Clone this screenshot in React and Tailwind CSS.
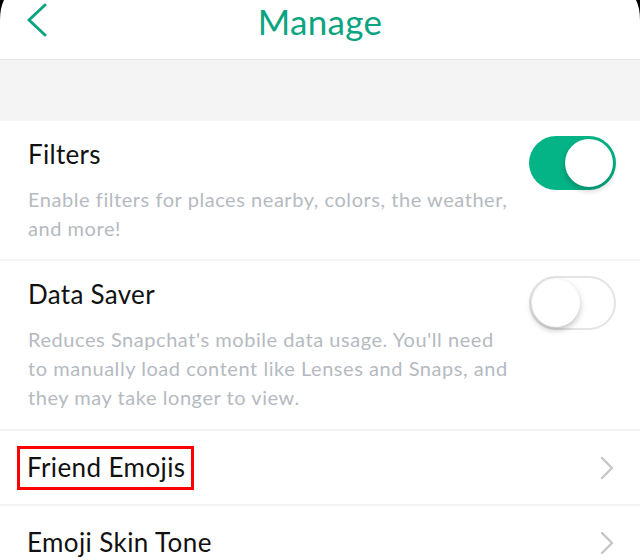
// App.jsx
const GREEN = '#0aa480';

const BackIcon = () => (
  <svg width="22" height="34" viewBox="0 0 22 34" fill="none">
    <polyline points="19,2 3,17 19,32" stroke={GREEN} strokeWidth="3" strokeLinecap="round" strokeLinejoin="round" />
  </svg>
);

const ChevronRight = () => (
  <svg width="14" height="22" viewBox="0 0 14 22" fill="none">
    <polyline points="2,1 12,11 2,21" stroke="#c6c6c6" strokeWidth="2.4" strokeLinecap="round" strokeLinejoin="round" />
  </svg>
);

const Toggle = ({ on }) => (
  <div
    className={`relative shrink-0 w-[87px] h-[54px] rounded-full mt-[15px] ${
      on ? 'bg-[#04b487]' : 'bg-white border-2 border-[#e4e4e4]'
    }`}
  >
    <div
      className={`absolute top-1/2 -translate-y-1/2 w-[48px] h-[48px] rounded-full bg-white shadow-[0_3px_6px_rgba(0,0,0,0.25)] ${
        on ? 'right-[3px]' : 'left-[1px]'
      }`}
    />
  </div>
);

const ToggleSection = ({ title, lines, on, height }) => (
  <div className={`flex justify-between pl-[28px] pr-[24px] bg-white ${height}`}>
    <div className="flex flex-col">
      <div className="text-[26px] leading-[32px] tracking-[0.3px] text-[#111] mt-[17px]">{title}</div>
      <div className="text-[20px] leading-[29px] tracking-[0.55px] text-[#b5bac1] mt-[15px]">
        {lines.map((l, i) => (
          <div key={i}>{l}</div>
        ))}
      </div>
    </div>
    <Toggle on={on} />
  </div>
);

const LinkRow = ({ label, boxed }) => (
  <div className="flex items-center justify-between h-[73px] pl-[17px] pr-[26px] bg-white">
    <div
      className={`h-[44px] flex items-center pl-[7px] pr-[6px] border-[3px] text-[26px] tracking-[0.4px] text-[#111] ${
        boxed ? 'border-[#ff0000]' : 'border-transparent'
      }`}
    >
      {label}
    </div>
    <ChevronRight />
  </div>
);

export default function App() {
  return (
    <div className="relative w-[640px] h-[560px] overflow-hidden bg-white font-['Lato','Noto_Sans',sans-serif]">
      <svg className="absolute left-0 top-0" width="6" height="22" viewBox="0 0 6 22">
        <path d="M0 0 L4 0 Q0 8 0 20 Z" fill="#000" />
      </svg>
      <svg className="absolute right-0 top-0" width="6" height="22" viewBox="0 0 6 22">
        <path d="M6 0 L2 0 Q6 8 6 20 Z" fill="#000" />
      </svg>

      <header className="grid grid-cols-[1fr_auto_1fr] items-center h-[60px] border-b border-[#e6e6e6]">
        <div className="pl-[26px] flex items-center -mt-[20px]">
          <BackIcon />
        </div>
        <h1 className="text-[35px] leading-none tracking-[0.3px] text-[#0aa480] -mt-[16px]">Manage</h1>
        <div />
      </header>

      <div className="h-[61px] bg-[#f4f4f4]" />

      <div className="flex flex-col gap-[2px] bg-[#f3f3f3]">
        <ToggleSection
          title="Filters"
          on
          height="h-[138px]"
          lines={['Enable filters for places nearby, colors, the weather,', 'and more!']}
        />
        <ToggleSection
          title="Data Saver"
          on={false}
          height="h-[168px]"
          lines={[
            "Reduces Snapchat's mobile data usage. You'll need",
            'to manually load content like Lenses and Snaps, and',
            'they may take longer to view.',
          ]}
        />
        <LinkRow label="Friend Emojis" boxed />
        <LinkRow label="Emoji Skin Tone" />
      </div>
    </div>
  );
}
